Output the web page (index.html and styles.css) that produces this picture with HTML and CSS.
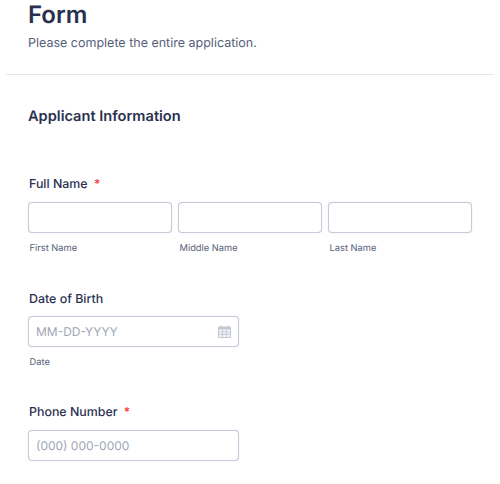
FILE: index.html
```html
<!DOCTYPE html>
<html lang="en">
<head>
<meta charset="utf-8">
<title>Form</title>
<link rel="stylesheet" href="styles.css">
</head>
<body>
<main class="form">
  <header class="form-header">
    <h1 class="form-title">Form</h1>
    <p class="form-subtitle">Please complete the entire application.</p>
  </header>
  <h2 class="section-title">Applicant Information</h2>

  <section class="field field-name">
    <div class="label">Full Name <span class="req">*</span></div>
    <div class="name-row">
      <div class="name-part"><div class="input"></div><div class="sublabel">First Name</div></div>
      <div class="name-part"><div class="input"></div><div class="sublabel">Middle Name</div></div>
      <div class="name-part"><div class="input"></div><div class="sublabel">Last Name</div></div>
    </div>
  </section>

  <section class="field field-date">
    <div class="label">Date of Birth</div>
    <div class="input input-wide">
      <span class="placeholder">MM-DD-YYYY</span>
      <svg class="cal" width="13" height="13" viewBox="0 0 13 13" aria-hidden="true">
        <path d="M0.5 2h12v10.500h-12z" fill="#f5f6f8" stroke="#c3c7d2"/>
        <path d="M0.500 2h12v2.500h-12z" fill="#c3c7d2"/>
        <path d="M3 0.500v2.500M10 0.500v2.500" stroke="#c3c7d2" stroke-width="1.200"/>
        <path d="M0.500 7h12M0.500 9.500h12M4.500 4.500v8M8.500 4.500v8" stroke="#c3c7d2" stroke-width="0.900"/>
      </svg>
    </div>
    <div class="sublabel">Date</div>
  </section>

  <section class="field field-phone">
    <div class="label">Phone Number <span class="req">*</span></div>
    <div class="input input-wide"><span class="placeholder">(000) 000-0000</span></div>
  </section>
</main>
</body>
</html>
```
FILE: styles.css
```css
html, body {
  margin: 0;
  padding: 0;
  height: 484px;
  overflow: hidden;
  background: #fff;
}
body {
  font-family: Inter, "Liberation Sans", sans-serif;
  color: #2c3345;
  text-rendering: geometricPrecision;
}
.form {
  padding: 0 6px;
}
.form-header {
  padding: 0 22px;
  height: 74px;
  border-bottom: 1px solid #e3e5ec;
}
.form-title {
  margin: 0;
  font-size: 24px;
  line-height: 29px;
  font-weight: 600;
  color: #2a3150;
}
.form-subtitle {
  margin: 6px 0 0;
  font-size: 12.500px;
  line-height: 18px;
  color: #57607a;
}
.section-title {
  margin: 31px 22px 0;
  font-size: 14.600px;
  line-height: 20px;
  font-weight: 600;
  color: #2a3150;
}
.field {
  padding-left: 22px;
}
.field-name { margin-top: 49px; }
.field-date { margin-top: 35px; }
.field-phone { margin-top: 34px; }
.label {
  padding-left: 1px;
  font-size: 12.400px;
  line-height: 18px;
  font-weight: 500;
  margin-bottom: 9px;
  color: #2a3150;
}
.field-date .label {
  margin-bottom: 8px;
}
.req {
  color: #f23a3c;
  margin-left: 3px;
}
.name-row {
  display: flex;
  gap: 6px;
}
.name-part {
  width: 144px;
}
.input {
  box-sizing: border-box;
  height: 31px;
  border: 1px solid #c6cbd9;
  border-radius: 4px;
  background: #fff;
  box-shadow: 0 0 1px #c6cbd9;
}
.input-wide {
  width: 211px;
  display: flex;
  align-items: center;
  justify-content: space-between;
  padding: 0 7px;
}
.placeholder {
  font-size: 12px;
  color: #a0a6b8;
}
.cal {
  display: block;
}
.sublabel {
  padding-left: 1.500px;
  margin-top: 9px;
  font-size: 9.300px;
  line-height: 13px;
  color: #57607a;
}
```
